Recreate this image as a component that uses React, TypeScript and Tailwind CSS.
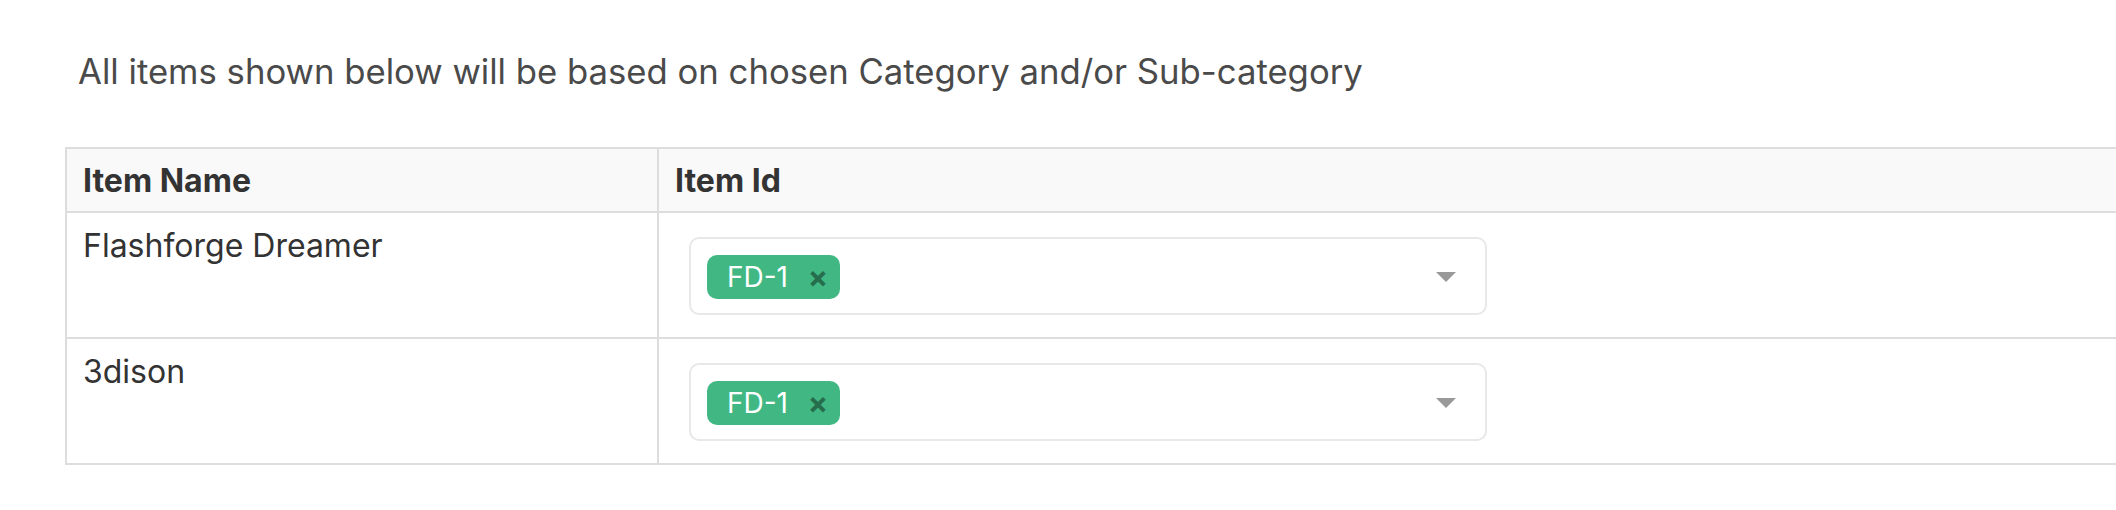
const rows = [
  { name: "Flashforge Dreamer", tag: "FD-1" },
  { name: "3dison", tag: "FD-1" },
];

function TagSelect({ tag }: { tag: string }) {
  return (
    <div className="flex h-[78px] w-[798px] items-start rounded-[10px] border-2 border-[#e8e8e8] bg-white pl-[16px] pt-[16px]">
      <span className="flex h-[44px] items-center rounded-[10px] bg-[#41b883] pl-[20px] text-[28px] leading-[28px] text-white">
        {tag}
        <span className="ml-[8px] flex h-full w-[44px] items-center justify-center text-[30px] font-bold text-[#266d4d]">
          ×
        </span>
      </span>
      <span className="ml-auto mr-[29px] mt-[17px] h-0 w-0 border-x-[10px] border-t-[10px] border-x-transparent border-t-[#999999]" />
    </div>
  );
}

export default function App() {
  return (
    <div className="h-[510px] w-[2116px] overflow-hidden bg-white font-['Inter',sans-serif] text-[#333333]">
      <p className="pl-[78px] pt-[47px] text-[34.7px] leading-[48px] text-[#4a4a4a]">
        All items shown below will be based on chosen Category and/or Sub-category
      </p>

      <div className="ml-[65px] mt-[52px] w-[2200px] border-2 border-[#dddddd]">
        <div className="flex h-[64px] border-b-2 border-[#dddddd] bg-[#f9f9f9] text-[32px] font-bold leading-[40px]">
          <div className="w-[592px] border-r-2 border-[#dddddd] pl-[16px] pt-[12px]">Item Name</div>
          <div className="flex-1 pl-[16px] pt-[12px]">Item Id</div>
        </div>
        {rows.map((row, i) => (
          <div
            key={row.name}
            className={`flex text-[32px] leading-[40px] ${i < rows.length - 1 ? "border-b-2 border-[#dddddd]" : ""}`}
          >
            <div className="w-[592px] border-r-2 border-[#dddddd] pl-[16px] pt-[13px]">{row.name}</div>
            <div className="flex-1 pb-[22px] pl-[30px] pt-[24px]">
              <TagSelect tag={row.tag} />
            </div>
          </div>
        ))}
      </div>
    </div>
  );
}
